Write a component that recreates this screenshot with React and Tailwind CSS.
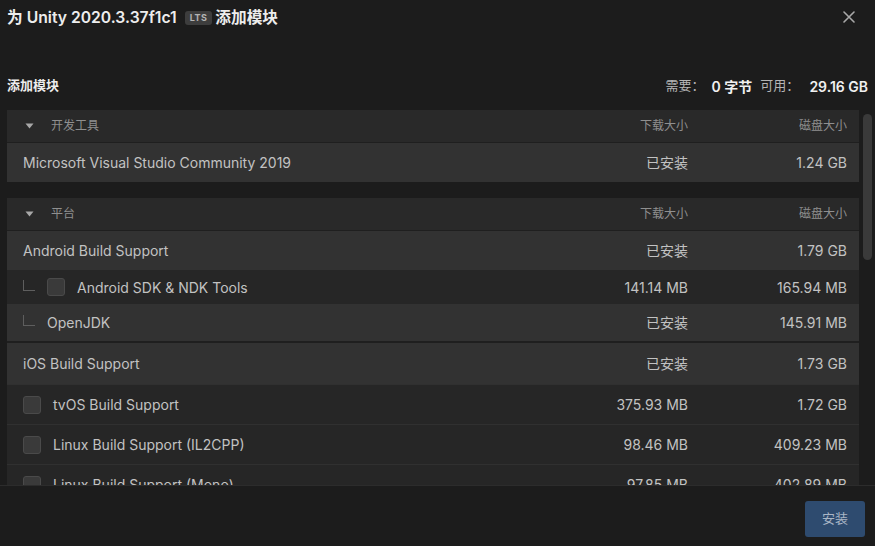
import React from "react";

const FONT = { fontFamily: 'Inter, "Noto Sans CJK SC", "Noto Sans", sans-serif' };

function Checkbox() {
  return <div className="w-[18px] h-[18px] rounded-[3px] bg-[#3a3a3a] border border-[#4a4a4a] shrink-0" />;
}

function Connector() {
  return <div className="w-[12px] h-[11px] border-l border-b border-[#5e5e5e] shrink-0 -mt-[4px]" />;
}

function SectionHeader({ title }) {
  return (
    <div className="h-[32px] shrink-0 bg-[#292929] flex items-center text-[12px] text-[#8f8f8f]">
      <div className="flex-1 flex items-center pl-[18px]">
        <svg width="9" height="6" viewBox="0 0 9 6" className="shrink-0">
          <path d="M0.5 0.5 L8.5 0.5 L4.5 5.5 Z" fill="#a8a8a8" />
        </svg>
        <span className="ml-[17px]">{title}</span>
      </div>
      <div className="w-[120px] text-right">下载大小</div>
      <div className="w-[171px] text-right pr-[12px]">磁盘大小</div>
    </div>
  );
}

function Row({ name, dl, disk, light, h = "h-[40px]", kind, border = "border-t border-[#1f1f1f]" }) {
  return (
    <div className={`${h} shrink-0 ${light ? "bg-[#323232]" : "bg-[#262626]"} ${border} flex items-center text-[14px] text-[#c2c2c2]`}>
      <div className="flex-1 flex items-center pl-[16px] gap-[12px] min-w-0">
        {kind === "sub-check" && (<><Connector /><Checkbox /></>)}
        {kind === "sub" && <Connector />}
        {kind === "check" && <Checkbox />}
        <span className="whitespace-nowrap">{name}</span>
      </div>
      <div className="w-[120px] text-right whitespace-nowrap">{dl}</div>
      <div className="w-[171px] text-right pr-[12px] whitespace-nowrap">{disk}</div>
    </div>
  );
}

export default function App() {
  return (
    <div style={FONT} className="w-[875px] h-[546px] bg-[#1c1c1c] flex flex-col overflow-hidden">
      <div className="h-[34px] mt-[1px] flex items-center pl-[7px] pr-[20px] shrink-0">
        <div className="flex items-center flex-1 text-[15.7px] font-semibold text-[#ededed]">
          <span>为 Unity 2020.3.37f1c1</span>
          <span className="ml-[8px] mr-[3px] h-[14px] px-[5px] rounded-[3px] bg-[#3d3d3d] text-[#b3b3b3] text-[9px] font-bold flex items-center tracking-[0.5px]">LTS</span>
          <span>添加模块</span>
        </div>
        <svg width="12" height="12" viewBox="0 0 12 12" className="-mt-[3px]">
          <path d="M1 1 L11 11 M11 1 L1 11" stroke="#a8a8a8" strokeWidth="1.6" strokeLinecap="round" />
        </svg>
      </div>
      <div className="h-[24px] mt-[39px] mb-[12px] flex items-center pl-[7px] pr-[7px] shrink-0">
        <div className="flex-1 text-[13px] font-semibold text-[#ededed]">添加模块</div>
        <div className="flex items-center">
          <span className="text-[13px] text-[#b4b4b4]">需要：</span>
          <span className="ml-[7px] text-[14px] text-[#f0f0f0] font-semibold">0 字节</span>
          <span className="ml-[8px] text-[13px] text-[#b4b4b4]">可用：</span>
          <span className="ml-[10px] text-[14px] text-[#f0f0f0] font-semibold">29.16 GB</span>
        </div>
      </div>
      <div className="flex flex-1 min-h-0">
        <div className="ml-[7px] w-[852px] overflow-hidden flex flex-col">
          <SectionHeader title="开发工具" />
          <Row name="Microsoft Visual Studio Community 2019" dl="已安装" disk="1.24 GB" light h="h-[40px]" />
          <div className="h-[16px] shrink-0" />
          <SectionHeader title="平台" />
          <Row name="Android Build Support" dl="已安装" disk="1.79 GB" light h="h-[40px]" />
          <Row name="Android SDK & NDK Tools" dl="141.14 MB" disk="165.94 MB" kind="sub-check" h="h-[34px]" border="" />
          <Row name="OpenJDK" dl="已安装" disk="145.91 MB" light kind="sub" h="h-[37px]" border="" />
          <Row name="iOS Build Support" dl="已安装" disk="1.73 GB" light h="h-[43px]" border="border-t-2 border-[#1f1f1f]" />
          <Row name="tvOS Build Support" dl="375.93 MB" disk="1.72 GB" kind="check" h="h-[40px]" border="border-t border-[#303030]" />
          <Row name="Linux Build Support (IL2CPP)" dl="98.46 MB" disk="409.23 MB" kind="check" h="h-[40px]" border="border-t border-[#303030]" />
          <Row name="Linux Build Support (Mono)" dl="97.85 MB" disk="402.89 MB" kind="check" h="h-[40px]" border="border-t border-[#303030]" />
        </div>
        <div className="ml-[4px] w-[9px] flex flex-col pt-[4px]">
          <div className="h-[146px] w-[9px] rounded-[5px] bg-[#3a3a3a]" />
        </div>
      </div>
      <div className="h-[61px] shrink-0 border-t border-[#2c2c2c] bg-[#1c1c1c] flex items-start justify-end pt-[15px] pr-[10px]">
        <div className="w-[60px] h-[36px] rounded-[3px] bg-[#2e4b6f] flex items-center justify-center text-[13px] text-[#a9b5c5]">安装</div>
      </div>
    </div>
  );
}
